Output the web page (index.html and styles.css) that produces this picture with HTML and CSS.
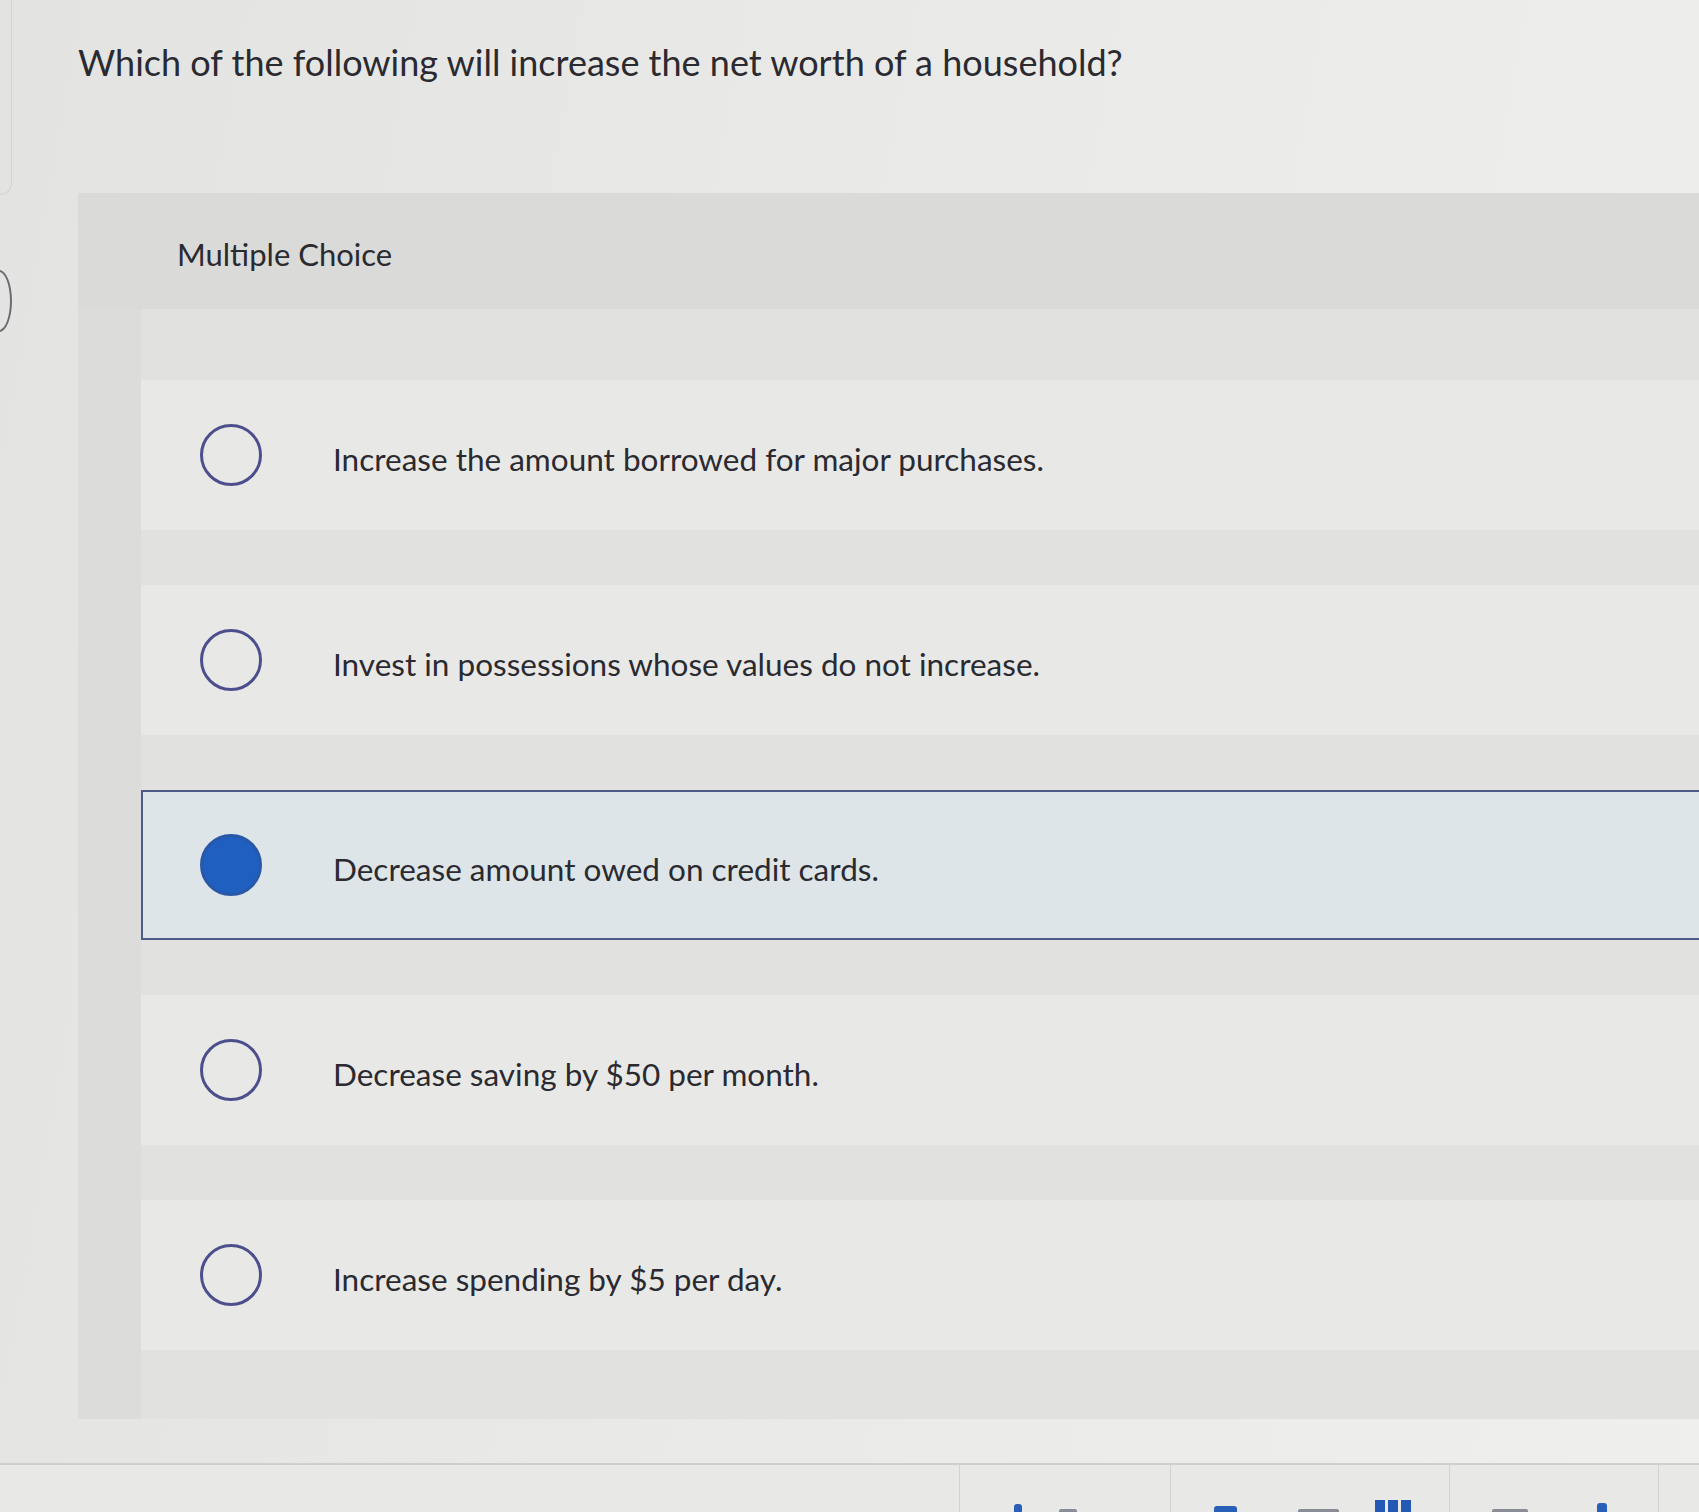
FILE: index.html
```html
<!DOCTYPE html>
<html lang="en">
<head>
<meta charset="utf-8">
<title>Multiple Choice</title>
<link rel="stylesheet" href="styles.css">
</head>
<body>
<div class="screen">
  <div class="edge-frame"></div>
  <div class="edge-bracket"></div>
  <main class="content">
    <h1 class="question">Which of the following will increase the net worth of a household?</h1>
    <section class="panel">
      <div class="panel-header">Multiple Choice</div>
      <ul class="options">
        <li class="option"><span class="radio"></span><span class="label">Increase the amount borrowed for major purchases.</span></li>
        <li class="option"><span class="radio"></span><span class="label">Invest in possessions whose values do not increase.</span></li>
        <li class="option selected"><span class="radio"></span><span class="label">Decrease amount owed on credit cards.</span></li>
        <li class="option"><span class="radio"></span><span class="label">Decrease saving by $50 per month.</span></li>
        <li class="option"><span class="radio"></span><span class="label">Increase spending by $5 per day.</span></li>
      </ul>
    </section>
  </main>
  <footer class="footer">
    <div class="footer-spacer"></div>
    <div class="footer-cell c2">
      <span class="peek blue b1"></span>
      <span class="peek dark d1"></span>
    </div>
    <div class="footer-cell c3">
      <span class="peek blue b2"></span>
      <span class="peek dark d2"></span>
      <span class="peek grid"><i></i><i></i><i></i></span>
    </div>
    <div class="footer-cell c4">
      <span class="peek dark d3"></span>
      <span class="peek blue b3"></span>
    </div>
    <div class="footer-cell c5"></div>
  </footer>
</div>
</body>
</html>
```
FILE: styles.css
```css
* { box-sizing: border-box; }
html, body { margin: 0; padding: 0; }
body {
  width: 1699px;
  height: 1512px;
  overflow: hidden;
  font-family: Lato, "Open Sans", "Liberation Sans", sans-serif;
  color: #2a2a30;
  background: linear-gradient(100deg, #e3e4e2 0%, #e9eae8 45%, #efefed 100%);
}
.screen {
  position: relative;
  width: 1699px;
  height: 1512px;
  display: flex;
  flex-direction: column;
}
.edge-frame {
  position: absolute;
  left: 0;
  top: -20px;
  width: 12px;
  height: 215px;
  border-right: 1px solid #d3d4d2;
  border-bottom: 1px solid #d3d4d2;
  border-bottom-right-radius: 12px;
}
.edge-bracket {
  position: absolute;
  left: -14px;
  top: 270px;
  width: 26px;
  height: 62px;
  border: 2px solid #6a6b70;
  border-radius: 50%;
}
.content {
  padding-left: 78px;
  height: 1463px;
}
.question {
  margin: 0;
  padding-top: 42px;
  height: 193px;
  font-size: 36px;
  font-weight: 400;
  line-height: 40px;
}
.panel {
  background: #dcdddb;
  height: 1226px;
}
.panel-header {
  height: 116px;
  padding-left: 99px;
  display: flex;
  align-items: center;
  font-size: 31px;
  padding-top: 6px;
  background: #dadbd9;
}
.options {
  list-style: none;
  margin: 0;
  padding: 71px 0 0 63px;
  display: flex;
  flex-direction: column;
  gap: 55px;
  background: linear-gradient(90deg, #dcdddb 0, #dcdddb 63px, #e1e2e0 63px);
  height: 1110px;
}
.option {
  height: 150px;
  background: #e8e9e7;
  display: flex;
  align-items: center;
  padding-left: 59px;
  font-size: 31.5px;
}
.option .label { padding-top: 8px; }
.option .radio {
  width: 62px;
  height: 62px;
  border-radius: 50%;
  border: 3px solid #4c4f8c;
  flex: none;
  margin-right: 71px;
  background: transparent;
}
.option.selected {
  background: #dde5e8;
  border: 2px solid #4d5c86;
  border-right: none;
  padding-left: 57px;
}
.option.selected .radio {
  background: #1f5fc0;
  border-color: #2a58a8;
}
.footer {
  height: 49px;
  border-top: 2px solid #cfd0ce;
  display: flex;
  background: #e8e9e7;
}
.footer-spacer { width: 959px; flex: none; }
.footer-cell {
  border-left: 1px solid #d2d3d1;
  display: flex;
  align-items: flex-end;
  flex: none;
}
.footer-cell.c2 { width: 211px; padding-left: 54px; gap: 37px; }
.footer-cell.c3 { width: 279px; padding-left: 43px; }
.footer-cell.c4 { width: 209px; padding-left: 42px; }
.footer-cell.c5 { flex: 1; }
.peek { display: block; height: 7px; flex: none; }
.peek.blue { background: #2a5fb8; border-radius: 3px 3px 0 0; }
.peek.dark { background: #8a8d95; height: 3px; border-radius: 2px 2px 0 0; }
.peek.b1 { width: 8px; height: 8px; }
.peek.d1 { width: 18px; }
.peek.b2 { width: 23px; height: 6px; }
.peek.d2 { width: 41px; margin-left: 61px; }
.peek.grid { display: flex; gap: 3px; height: 12px; margin-left: 36px; }
.peek.grid i { display: block; width: 10px; height: 12px; background: #2458b5; }
.peek.d3 { width: 36px; }
.peek.b3 { width: 10px; height: 9px; margin-left: 69px; }
```
